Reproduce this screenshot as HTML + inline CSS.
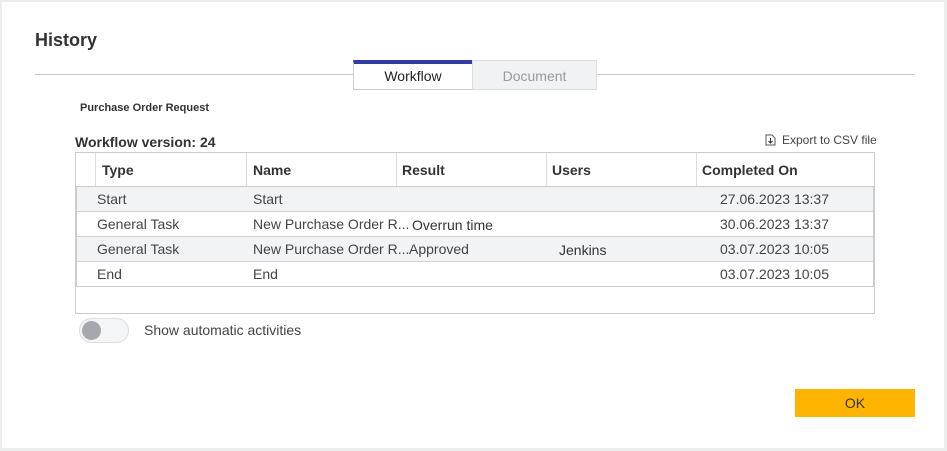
<!DOCTYPE html>
<html><head><meta charset="utf-8"><style>
*{margin:0;padding:0;box-sizing:border-box}
body{width:947px;height:451px;background:#eceeee;font-family:"Liberation Sans",sans-serif;position:relative;overflow:hidden;color:#333}
.dlg{position:absolute;left:2px;top:2px;width:942px;height:446px;background:#fff}
.a{position:absolute;white-space:nowrap}
.hd{font-weight:bold;font-size:14px;color:#333}
.cell{font-size:14px;color:#444}
</style></head><body>
<div class="dlg"></div>
<div class="a" style="left:35px;top:30px;font-size:18px;font-weight:bold;color:#333">History</div>
<div class="a" style="left:35px;top:74px;width:880px;height:1px;background:#c8c8c8"></div>
<div class="a" style="left:353px;top:60px;width:120px;height:30px;background:#fff;border:1px solid #ccc;border-top:4px solid #2f3ab0"></div>
<div class="a" style="left:353px;top:68px;width:120px;text-align:center;font-size:14px;color:#222">Workflow</div>
<div class="a" style="left:472px;top:60px;width:125px;height:30px;background:#f1f2f4;border:1px solid #ddd"></div>
<div class="a" style="left:472px;top:68px;width:125px;text-align:center;font-size:14px;color:#999">Document</div>
<div class="a" style="left:80px;top:102px;font-size:11px;font-weight:bold;color:#333">Purchase Order Request</div>
<div class="a" style="left:75px;top:134px;font-size:14px;font-weight:bold;color:#333">Workflow version: 24</div>
<svg class="a" style="left:765px;top:134px" width="11" height="12" viewBox="0 0 11 12"><path d="M1 1h6l3 3v7H1z" fill="none" stroke="#555"/><path d="M5.5 4v5M3.5 7l2 2 2-2" fill="none" stroke="#333"/></svg>
<div class="a" style="left:782px;top:133px;font-size:12px;color:#444">Export to CSV file</div>
<div class="a" style="left:75px;top:152px;width:800px;height:162px;border:1px solid #ccc"></div>
<div class="a" style="left:95px;top:153px;width:1px;height:34px;background:#ddd"></div>
<div class="a" style="left:246px;top:153px;width:1px;height:34px;background:#ddd"></div>
<div class="a" style="left:396px;top:153px;width:1px;height:34px;background:#ddd"></div>
<div class="a" style="left:546px;top:153px;width:1px;height:34px;background:#ddd"></div>
<div class="a" style="left:696px;top:153px;width:1px;height:34px;background:#ddd"></div>
<div class="a hd" style="left:102px;top:162px">Type</div>
<div class="a hd" style="left:253px;top:162px">Name</div>
<div class="a hd" style="left:402px;top:162px">Result</div>
<div class="a hd" style="left:552px;top:162px">Users</div>
<div class="a hd" style="left:702px;top:162px">Completed On</div>
<div class="a" style="left:76px;top:186px;width:798px;height:101px;border:1px solid #ccc;border-bottom:1px solid #ccc"></div>
<div class="a" style="left:77px;top:187px;width:796px;height:24px;background:#f2f3f5"></div>
<div class="a" style="left:77px;top:211px;width:796px;height:1px;background:#d0d3d8"></div>
<div class="a" style="left:77px;top:236px;width:796px;height:1px;background:#d0d3d8"></div>
<div class="a" style="left:77px;top:237px;width:796px;height:24px;background:#f2f3f5"></div>
<div class="a" style="left:77px;top:261px;width:796px;height:1px;background:#d0d3d8"></div>
<div class="a cell" style="left:97px;top:191px">Start</div>
<div class="a cell" style="left:253px;top:191px">Start</div>
<div class="a cell" style="left:720px;top:191px">27.06.2023 13:37</div>
<div class="a cell" style="left:97px;top:216px">General Task</div>
<div class="a cell" style="left:253px;top:216px">New Purchase Order R...</div>
<div class="a cell" style="left:412px;top:217px;color:#333">Overrun time</div>
<div class="a cell" style="left:720px;top:216px">30.06.2023 13:37</div>
<div class="a cell" style="left:97px;top:241px">General Task</div>
<div class="a cell" style="left:253px;top:241px">New Purchase Order R...</div>
<div class="a cell" style="left:409px;top:241px">Approved</div>
<div class="a cell" style="left:559px;top:242px;color:#333">Jenkins</div>
<div class="a cell" style="left:720px;top:241px">03.07.2023 10:05</div>
<div class="a cell" style="left:97px;top:266px">End</div>
<div class="a cell" style="left:253px;top:266px">End</div>
<div class="a cell" style="left:720px;top:266px">03.07.2023 10:05</div>
<div class="a" style="left:79px;top:318px;width:50px;height:25px;border-radius:13px;background:#f4f5f6;border:1px solid #ddd"></div>
<div class="a" style="left:82px;top:321px;width:19px;height:19px;border-radius:50%;background:#a5a9ae"></div>
<div class="a" style="left:144px;top:322px;font-size:14px;color:#444">Show automatic activities</div>
<div class="a" style="left:795px;top:389px;width:120px;height:28px;background:#ffb400;text-align:center;line-height:28px;font-size:14px;color:#333">OK</div>
</body></html>
